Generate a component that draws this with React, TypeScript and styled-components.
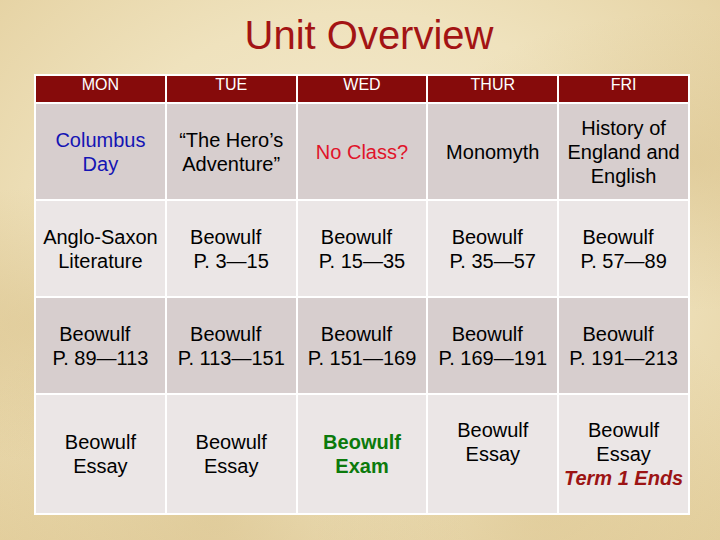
import styled, { createGlobalStyle } from "styled-components";

const GlobalStyle = createGlobalStyle`
  html, body {
    margin: 0;
    padding: 0;
  }
  body {
    font-family: "Liberation Sans", Arial, sans-serif;
  }
`;

// fondo tipo pergamino
const Slide = styled.div`
  width: 720px;
  height: 540px;
  box-sizing: border-box;
  padding-top: 12px;
  display: flex;
  flex-direction: column;
  align-items: center;
  overflow: hidden;
  background:
    radial-gradient(ellipse at 8% 60%, rgba(205, 175, 110, 0.35), transparent 30%),
    radial-gradient(ellipse at 95% 30%, rgba(205, 175, 110, 0.35), transparent 28%),
    radial-gradient(ellipse at 30% 95%, rgba(200, 170, 105, 0.3), transparent 35%),
    radial-gradient(ellipse at 75% 92%, rgba(205, 175, 110, 0.3), transparent 30%),
    radial-gradient(ellipse at 50% 45%, #f4ead0 0%, #efe2bd 55%, #e4d09f 100%);
`;

const Title = styled.h1`
  margin: 0 0 16px 0;
  padding-left: 18px;
  height: 46px;
  font-size: 40px;
  line-height: 46px;
  font-weight: normal;
  color: #a31414;
`;

const Grid = styled.div`
  display: grid;
  grid-template-columns: repeat(5, 1fr);
  grid-template-rows: 26px 95px 95px 95px 118px;
  gap: 2px;
  padding: 2px;
  width: 656px;
  box-sizing: border-box;
  margin-left: 4px;
  background: #ffffff;
`;

const HeadCell = styled.div`
  background: #860b0b;
  color: #ffffff;
  font-size: 16px;
  line-height: 18px;
  text-align: center;
`;

type CellProps = {
  $shade: boolean;
};

const Cell = styled.div<CellProps>`
  background: ${(p) => (p.$shade ? "#d7cece" : "#ebe6e6")};
  display: flex;
  align-items: center;
  justify-content: center;
  text-align: center;
  font-size: 20px;
  line-height: 24px;
  color: #000000;
`;

type InkProps = {
  $color?: string;
  $bold?: boolean;
  $italic?: boolean;
};

const Ink = styled.span<InkProps>`
  color: ${(p) => p.$color || "inherit"};
  font-weight: ${(p) => (p.$bold ? "bold" : "normal")};
  font-style: ${(p) => (p.$italic ? "italic" : "normal")};
`;

const days = ["MON", "TUE", "WED", "THUR", "FRI"];

const sp = "\u00a0\u00a0";

export default function App() {
  return (
    <>
      <GlobalStyle />
      <Slide>
        <Title>Unit Overview</Title>
        <Grid>
          {days.map((d) => (
            <HeadCell key={d}>{d}</HeadCell>
          ))}

          <Cell $shade>
            <Ink $color="#1414b4">
              Columbus
              <br />
              Day
            </Ink>
          </Cell>
          <Cell $shade>
            <span>
              “The Hero’s
              <br />
              Adventure”
            </span>
          </Cell>
          <Cell $shade>
            <Ink $color="#e0142a">No Class?</Ink>
          </Cell>
          <Cell $shade>Monomyth</Cell>
          <Cell $shade>
            <span>
              History of
              <br />
              England and
              <br />
              English
            </span>
          </Cell>

          <Cell $shade={false}>
            <span>
              Anglo-Saxon
              <br />
              Literature
            </span>
          </Cell>
          <Cell $shade={false}>
            <span>
              Beowulf{sp}
              <br />
              P. 3—15
            </span>
          </Cell>
          <Cell $shade={false}>
            <span>
              Beowulf{sp}
              <br />
              P. 15—35
            </span>
          </Cell>
          <Cell $shade={false}>
            <span>
              Beowulf{sp}
              <br />
              P. 35—57
            </span>
          </Cell>
          <Cell $shade={false}>
            <span>
              Beowulf{sp}
              <br />
              P. 57—89
            </span>
          </Cell>

          <Cell $shade>
            <span>
              Beowulf{sp}
              <br />
              P. 89—113
            </span>
          </Cell>
          <Cell $shade>
            <span>
              Beowulf{sp}
              <br />
              P. 113—151
            </span>
          </Cell>
          <Cell $shade>
            <span>
              Beowulf{sp}
              <br />
              P. 151—169
            </span>
          </Cell>
          <Cell $shade>
            <span>
              Beowulf{sp}
              <br />
              P. 169—191
            </span>
          </Cell>
          <Cell $shade>
            <span>
              Beowulf{sp}
              <br />
              P. 191—213
            </span>
          </Cell>

          <Cell $shade={false}>
            <span>
              Beowulf
              <br />
              Essay
            </span>
          </Cell>
          <Cell $shade={false}>
            <span>
              Beowulf
              <br />
              Essay
            </span>
          </Cell>
          <Cell $shade={false}>
            <Ink $color="#0c7a0c" $bold>
              Beowulf
              <br />
              Exam
            </Ink>
          </Cell>
          <Cell $shade={false}>
            <span>
              Beowulf
              <br />
              Essay
              <br />
              {"\u00a0"}
            </span>
          </Cell>
          <Cell $shade={false}>
            <span>
              Beowulf
              <br />
              Essay
              <br />
              <Ink $color="#9c1414" $bold $italic>
                Term 1 Ends
              </Ink>
            </span>
          </Cell>
        </Grid>
      </Slide>
    </>
  );
}
